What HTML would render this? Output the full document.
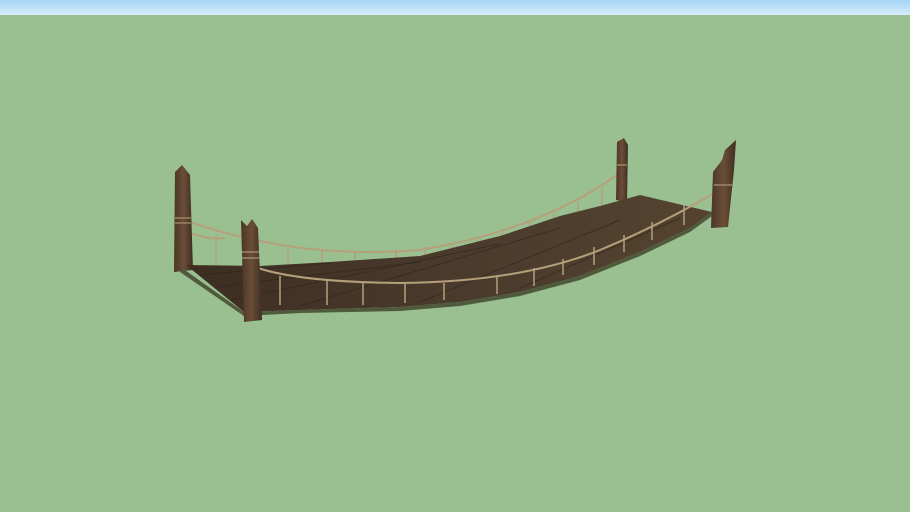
<!DOCTYPE html>
<html><head><meta charset="utf-8"><style>
html,body{margin:0;padding:0;width:910px;height:512px;overflow:hidden;background:#9abf90}
.sky{position:absolute;left:0;top:0;width:910px;height:15px;background:linear-gradient(#a5d5f7,#d6ecf9)}
svg{position:absolute;left:0;top:0}
</style></head><body>
<div class="sky"></div>
<svg width="910" height="512" viewBox="0 0 910 512">
<defs>
<linearGradient id="dk" x1="0" y1="0" x2="1" y2="0">
<stop offset="0" stop-color="#3d2e22"/><stop offset="0.5" stop-color="#4a3a2c"/><stop offset="1" stop-color="#54432f"/></linearGradient>
<linearGradient id="pt" x1="0" y1="0" x2="1" y2="0">
<stop offset="0" stop-color="#4a3526"/><stop offset="0.5" stop-color="#6b4e38"/><stop offset="1" stop-color="#3e2e22"/></linearGradient>
</defs>
<!-- back rope & post -->
<path d="M190,222 Q300,260 420,250 Q540,230 617,175" fill="none" stroke="#b5a07c" stroke-width="2"/>
<path d="M190,233 Q210,240 225,238" fill="none" stroke="#b5a07c" stroke-width="2"/>
<g stroke="#b5a07c" stroke-width="1.5">
<line x1="216" y1="235" x2="216" y2="265"/><line x1="258" y1="248" x2="258" y2="268"/><line x1="288" y1="250" x2="288" y2="267"/><line x1="322" y1="251" x2="322" y2="266"/><line x1="355" y1="251" x2="355" y2="264"/><line x1="396" y1="249" x2="396" y2="262"/><line x1="425" y1="247" x2="425" y2="258"/><line x1="452" y1="243" x2="452" y2="254"/><line x1="477" y1="238" x2="477" y2="248"/><line x1="502" y1="232" x2="502" y2="244"/><line x1="530" y1="222" x2="530" y2="232"/><line x1="554" y1="213" x2="554" y2="222"/><line x1="578" y1="203" x2="578" y2="214"/><line x1="602" y1="188" x2="602" y2="206"/>
</g>
<path d="M616,200 L617,142 L624,138 L628,145 L627,202 Z" fill="url(#pt)"/>
<path d="M174,272 L175,172 L182,165 L190,175 L193,270 Z" fill="url(#pt)"/>
<!-- deck -->
<path d="M186,265 L260,266 L330,262 L420,256 L500,236 L560,216 L600,206 L640,195 L712,212 L690,228 L640,252 L580,276 L520,292 L460,302 L400,307 L300,310 L244,312 Z" fill="url(#dk)"/>
<path d="M182,268 L244,312 L300,310 L400,307 L460,302 L520,292 L580,276 L640,252 L690,228 L712,212 L712,216 L690,232 L640,256 L580,280 L520,296 L460,306 L400,311 L300,313 L244,316 L180,272 Z" fill="#4f5a3c"/>
<g stroke="#2e231a" stroke-width="1" opacity="0.6">
<line x1="200" y1="275" x2="330" y2="263"/><line x1="215" y1="287" x2="420" y2="262"/><line x1="232" y1="300" x2="500" y2="244"/><line x1="300" y1="306" x2="560" y2="228"/><line x1="420" y1="302" x2="620" y2="220"/><line x1="520" y1="288" x2="680" y2="218"/>
</g>
<!-- front rope -->
<path d="M258,268 Q300,282 400,283 Q520,282 600,250 Q660,225 716,192" fill="none" stroke="#b5a07c" stroke-width="2"/>
<g stroke="#b5a07c" stroke-width="1.5">
<line x1="280" y1="276" x2="280" y2="305"/><line x1="327" y1="280" x2="327" y2="305"/><line x1="363" y1="282" x2="363" y2="305"/><line x1="405" y1="283" x2="405" y2="303"/><line x1="444" y1="283" x2="444" y2="300"/><line x1="497" y1="277" x2="497" y2="294"/><line x1="534" y1="268" x2="534" y2="286"/><line x1="563" y1="259" x2="563" y2="275"/><line x1="594" y1="247" x2="594" y2="265"/><line x1="624" y1="235" x2="624" y2="252"/><line x1="652" y1="222" x2="652" y2="240"/><line x1="684" y1="205" x2="684" y2="225"/>
</g>
<path d="M711,228 L713,172 L722,160 L725,150 L736,140 L734,170 L728,227 Z" fill="url(#pt)"/>
<path d="M244,322 L241,220 L247,226 L252,219 L258,228 L262,320 Z" fill="url(#pt)"/>
<g stroke="#a89470" stroke-width="1.2">
<line x1="242" y1="252" x2="259" y2="252"/><line x1="242" y1="258" x2="259" y2="258"/><line x1="175" y1="218" x2="191" y2="218"/><line x1="175" y1="223" x2="191" y2="223"/><line x1="617" y1="165" x2="627" y2="165"/><line x1="714" y1="185" x2="732" y2="185"/>
</g>
</svg>
</body></html>
